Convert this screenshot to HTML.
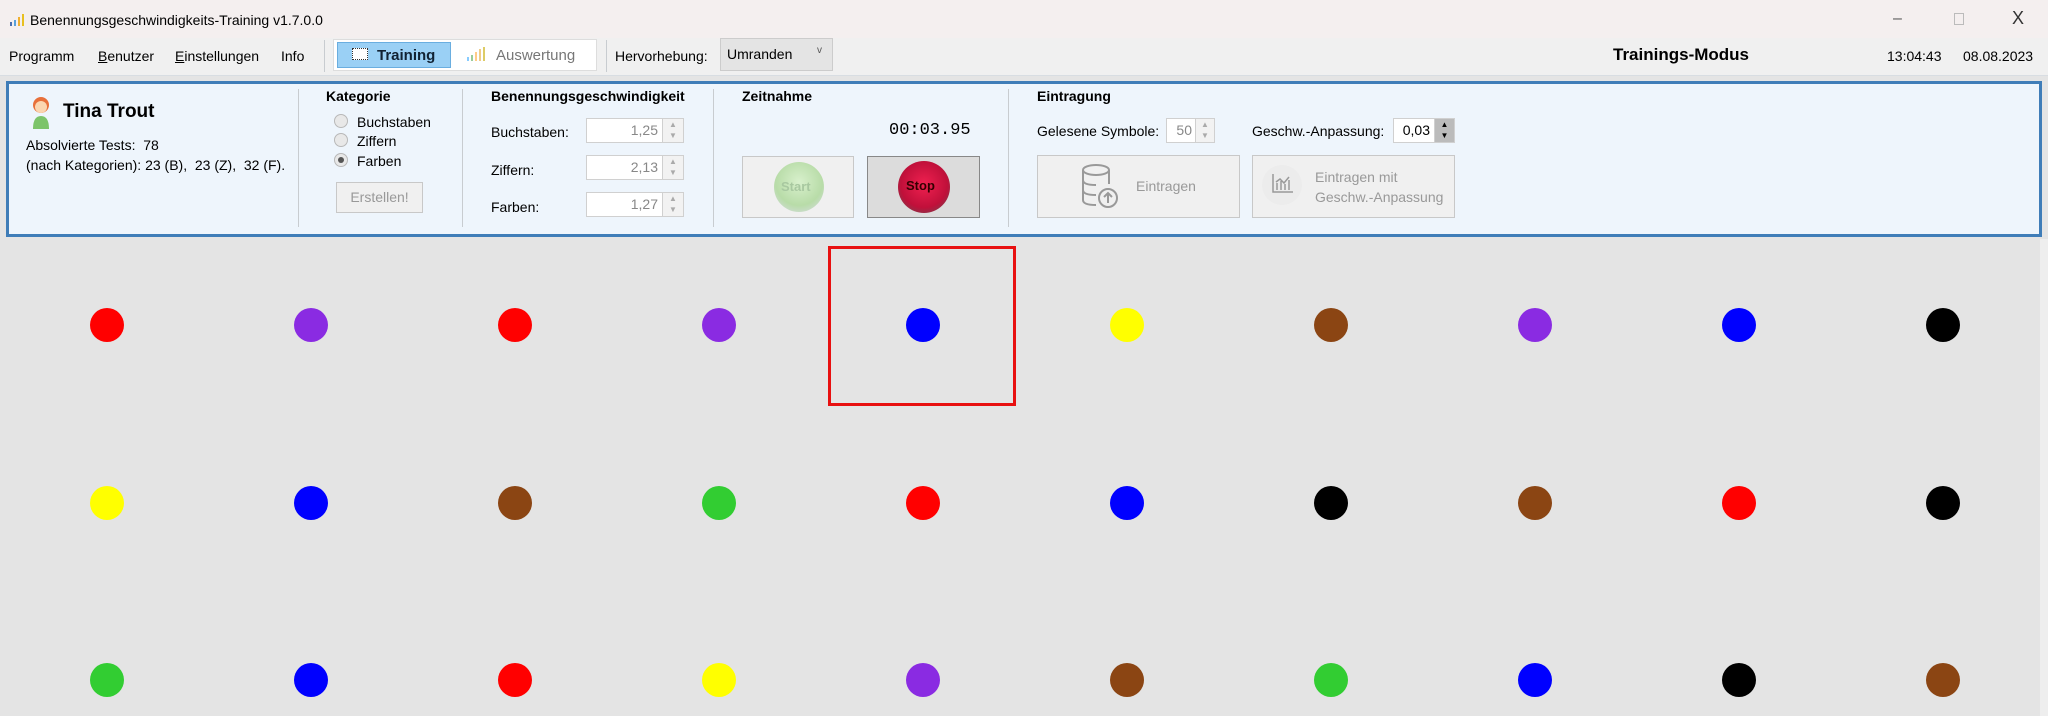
<!DOCTYPE html>
<html><head><meta charset="utf-8"><style>
*{margin:0;padding:0;box-sizing:border-box}
body{width:2048px;height:716px;overflow:hidden;font-family:"Liberation Sans",sans-serif;font-size:14px;color:#000;background:#e4e4e4;position:relative}
.a{position:absolute;white-space:nowrap}
.dot{position:absolute;width:34px;height:34px;border-radius:50%}
.sep{position:absolute;width:1px;background:#c8ccd0}
.inp{position:absolute;height:25px;background:#fff;border:1px solid #d0d0d0;text-align:right;padding-right:4px;line-height:23px;color:#888}
.spin{position:absolute;width:22px;height:25px;border:1px solid #d0d0d0;background:#f2f2f2;font-size:8px;color:#aaa;text-align:center;line-height:11px}
.radio{position:absolute;width:14px;height:14px;border-radius:50%;border:1px solid #b8b8b8;background:#e8e8e8}
.btn{position:absolute;border:1px solid #c8c8c8;background:#f0f0f0;color:#999}
</style></head><body>
<div class="a" style="left:0;top:0;width:2048px;height:38px;background:#f4efef"></div>
<svg class="a" style="left:10px;top:14px" width="16" height="12"><rect x="0" y="8" width="2" height="4" fill="#4a6fb0"/><rect x="4" y="6" width="2" height="6" fill="#5aa0d8"/><rect x="8" y="3" width="2" height="9" fill="#f0b030"/><rect x="12" y="0" width="2" height="12" fill="#e8c020"/></svg>
<div class="a" style="left:30px;top:12px;font-size:14px">Benennungsgeschwindigkeits-Training v1.7.0.0</div>
<div class="a" style="left:1893px;top:10px;font-size:16px;color:#555">–</div>
<div class="a" style="left:1954px;top:13px;width:10px;height:12px;border:1px solid #bbb"></div>
<div class="a" style="left:2012px;top:8px;font-size:18px;color:#333">X</div>
<div class="a" style="left:0;top:38px;width:2048px;height:38px;background:#f0f0f0;border-bottom:1px solid #d8dde2"></div>
<div class="a" style="left:9px;top:48px">Programm</div>
<div class="a" style="left:98px;top:48px"><u>B</u>enutzer</div>
<div class="a" style="left:175px;top:48px"><u>E</u>instellungen</div>
<div class="a" style="left:281px;top:48px">Info</div>
<div class="sep" style="left:324px;top:40px;height:32px"></div>
<div class="a" style="left:333px;top:39px;width:264px;height:32px;background:#fff;border:1px solid #ddd"></div>
<div class="a" style="left:337px;top:42px;width:114px;height:26px;background:#9ad0f5;border:1px solid #6aaee0"></div>
<div class="a" style="left:352px;top:48px;width:16px;height:12px;border:1px dotted #333;background:#fff"></div>
<div class="a" style="left:377px;top:47px;font-weight:bold;font-size:15px;color:#123">Training</div>
<svg class="a" style="left:467px;top:47px" width="22" height="14"><rect x="0" y="10" width="2" height="4" fill="#8cf"/><rect x="4" y="8" width="2" height="6" fill="#9c9"/><rect x="8" y="5" width="2" height="9" fill="#fc8"/><rect x="12" y="2" width="2" height="12" fill="#ec8"/><rect x="16" y="0" width="2" height="14" fill="#dc6"/></svg>
<div class="a" style="left:496px;top:47px;font-size:15px;color:#777">Auswertung</div>
<div class="sep" style="left:606px;top:40px;height:32px"></div>
<div class="a" style="left:615px;top:48px">Hervorhebung:</div>
<div class="a" style="left:720px;top:38px;width:113px;height:33px;background:#e4e4e4;border:1px solid #ccc"></div>
<div class="a" style="left:727px;top:46px">Umranden</div>
<div class="a" style="left:817px;top:45px;font-size:10px;color:#555">v</div>
<div class="a" style="left:1613px;top:45px;font-weight:bold;font-size:17px">Trainings-Modus</div>
<div class="a" style="left:1887px;top:48px">13:04:43</div>
<div class="a" style="left:1963px;top:48px">08.08.2023</div>
<div class="a" style="left:6px;top:81px;width:2036px;height:156px;background:#eef5fc;border:3px solid #3f7db8"></div>
<svg class="a" style="left:30px;top:95px" width="22" height="34"><circle cx="11" cy="10" r="8" fill="#e8703a"/><circle cx="11" cy="12" r="6" fill="#fbd6b0"/><path d="M3 34 Q3 21 11 21 Q19 21 19 34Z" fill="#7cc46a"/></svg>
<div class="a" style="left:63px;top:101px;font-weight:bold;font-size:19px">Tina Trout</div>
<div class="a" style="left:26px;top:137px">Absolvierte Tests:&nbsp; 78</div>
<div class="a" style="left:26px;top:157px">(nach Kategorien): 23 (B),&nbsp; 23 (Z),&nbsp; 32 (F).</div>
<div class="sep" style="left:298px;top:89px;height:138px"></div>
<div class="sep" style="left:462px;top:89px;height:138px"></div>
<div class="sep" style="left:713px;top:89px;height:138px"></div>
<div class="sep" style="left:1008px;top:89px;height:138px"></div>
<div class="a" style="left:326px;top:88px;font-weight:bold">Kategorie</div>
<div class="radio" style="left:334px;top:114px"></div><div class="a" style="left:357px;top:114px">Buchstaben</div>
<div class="radio" style="left:334px;top:133px"></div><div class="a" style="left:357px;top:133px">Ziffern</div>
<div class="radio" style="left:334px;top:153px"><div style="width:6px;height:6px;border-radius:50%;background:#555;margin:3px"></div></div><div class="a" style="left:357px;top:153px">Farben</div>
<div class="btn" style="left:336px;top:182px;width:87px;height:31px;text-align:center;line-height:29px">Erstellen!</div>
<div class="a" style="left:491px;top:88px;font-weight:bold">Benennungsgeschwindigkeit</div>
<div class="a" style="left:491px;top:124px">Buchstaben:</div>
<div class="a" style="left:491px;top:162px">Ziffern:</div>
<div class="a" style="left:491px;top:199px">Farben:</div>
<div class="inp" style="left:586px;top:118px;width:77px">1,25</div><div class="spin" style="left:662px;top:118px">▲<br>▼</div>
<div class="inp" style="left:586px;top:155px;width:77px">2,13</div><div class="spin" style="left:662px;top:155px">▲<br>▼</div>
<div class="inp" style="left:586px;top:192px;width:77px">1,27</div><div class="spin" style="left:662px;top:192px">▲<br>▼</div>
<div class="a" style="left:742px;top:88px;font-weight:bold">Zeitnahme</div>
<div class="a" style="left:889px;top:121px;font-family:'Liberation Mono',monospace;font-size:17px">00:03.95</div>
<div class="btn" style="left:742px;top:156px;width:112px;height:62px"></div>
<div class="a" style="left:774px;top:162px;width:50px;height:50px;border-radius:50%;background:radial-gradient(circle at 50% 40%,#d8f0cc,#b8dca8 60%,#dde 100%)"></div>
<div class="a" style="left:781px;top:179px;font-size:13px;font-weight:bold;color:#a8c8a0">Start</div>
<div class="a" style="left:867px;top:156px;width:113px;height:62px;background:#dcdcdc;border:1px solid #888"></div>
<div class="a" style="left:898px;top:161px;width:52px;height:52px;border-radius:50%;background:radial-gradient(circle at 50% 45%,#f02050,#c0103a 60%,#555 100%)"></div>
<div class="a" style="left:906px;top:178px;font-size:13px;font-weight:bold;color:#300">Stop</div>
<div class="a" style="left:1037px;top:88px;font-weight:bold">Eintragung</div>
<div class="a" style="left:1037px;top:123px">Gelesene Symbole:</div>
<div class="inp" style="left:1166px;top:118px;width:30px;padding-right:3px">50</div><div class="spin" style="left:1195px;top:118px;width:20px">▲<br>▼</div>
<div class="a" style="left:1252px;top:123px">Geschw.-Anpassung:</div>
<div class="inp" style="left:1393px;top:118px;width:42px;color:#000">0,03</div><div class="spin" style="left:1434px;top:118px;width:21px;background:#bbb;color:#000">▲<br>▼</div>
<div class="btn" style="left:1037px;top:155px;width:203px;height:63px"></div>
<svg class="a" style="left:1080px;top:162px" width="40" height="50" fill="none" stroke="#999" stroke-width="2"><ellipse cx="16" cy="8" rx="13" ry="5"/><path d="M3 8v30q0 5 13 5M29 8v14M3 18q0 5 13 5M3 28q0 5 13 5"/><circle cx="28" cy="36" r="9"/><path d="M28 41v-9M24 35l4-4 4 4"/></svg>
<div class="a" style="left:1136px;top:178px;color:#999">Eintragen</div>
<div class="btn" style="left:1252px;top:155px;width:203px;height:63px"></div>
<div class="a" style="left:1262px;top:165px;width:40px;height:40px;border-radius:50%;background:#ececec"></div>
<svg class="a" style="left:1271px;top:174px" width="22" height="20" fill="none" stroke="#999" stroke-width="1.5"><path d="M2 0v18h20M6 16v-7M10 16v-9M14 16v-6M18 16v-10M5 8l4-3 4 4 5-6"/></svg>
<div class="a" style="left:1315px;top:167px;color:#999;line-height:20px">Eintragen mit<br>Geschw.-Anpassung</div>
<div class="a" style="left:2040px;top:239px;width:8px;height:477px;background:#eee"></div>
<div class="a" style="left:828px;top:246px;width:188px;height:160px;border:3px solid #e81010"></div>
<div id="d"></div>
<script>
var C={r:'#ff0000',p:'#8a2be2',b:'#0000ff',y:'#ffff00',n:'#8b4513',k:'#000',g:'#32cd32'};
var rows=['rprpbynpbk','ybngrbknrk','gbrypngbkn'],ys=[325,503,680],h='';
rows.forEach(function(r,i){for(var j=0;j<10;j++){h+='<div class="dot" style="left:'+(107+204*j-17)+'px;top:'+(ys[i]-17)+'px;background:'+C[r[j]]+'"></div>';}});
document.getElementById('d').innerHTML=h;
</script>
</body></html>
